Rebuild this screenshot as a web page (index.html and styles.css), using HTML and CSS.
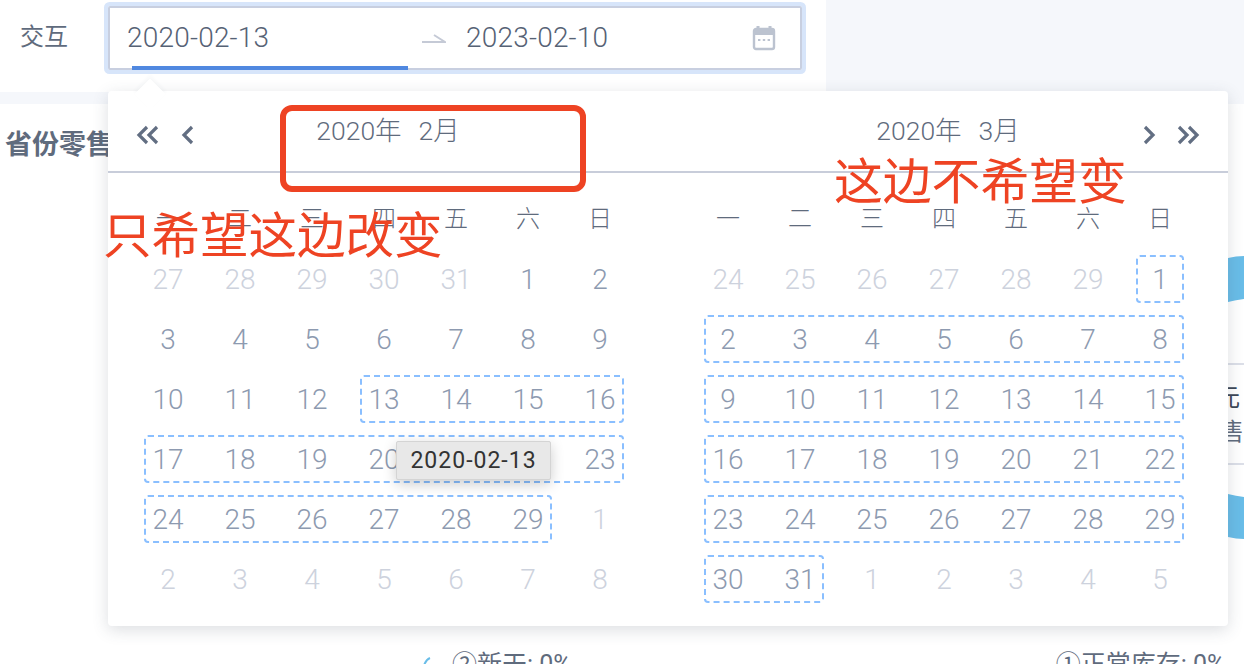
FILE: index.html
```html
<!DOCTYPE html>
<html lang="zh-CN">
<head>
  <meta charset="UTF-8">
  <title>交互</title>
  <link rel="stylesheet" href="styles.css">
</head>
<body>
  <div class="page">
    <div class="top">
      <div class="filter">
        <span class="filter-label">交互</span>
        <div class="range-input">
          <span class="date-text date-start">2020-02-13</span>
          <svg class="range-arrow" width="24" height="12" viewBox="0 0 24 12"><path d="M0 10H23L12 3" fill="none" stroke="#c5cad6" stroke-width="2"/></svg>
          <span class="date-text">2023-02-10</span>
          <svg class="cal-icon" width="24" height="26" viewBox="0 0 24 26"><path d="M6 1v4M18 1v4" stroke="#bcc3d0" stroke-width="3"/><rect x="2" y="4" width="20" height="20" rx="2" fill="none" stroke="#bcc3d0" stroke-width="2.4"/><rect x="2" y="4" width="20" height="6" fill="#bcc3d0"/><path d="M6 15h2.4M10.8 15h2.4M15.6 15h2.4" stroke="#bcc3d0" stroke-width="2"/></svg>
        </div>
      </div>
    </div>

    <div class="report">
      <div class="report-title">省份零售</div>
      <div class="side">
        <svg class="arc" width="16" height="48" viewBox="0 0 16 48"><path d="M0 3Q8 1 16 1V44Q8 45 0 47Z" fill="#69bde8"/></svg>
        <div class="side-card">
          <div class="side-main">元</div>
          <div class="side-sub">售</div>
        </div>
        <svg class="arc arc-low" width="16" height="48" viewBox="0 0 16 48"><path d="M0 0Q8 2 16 3V45Q8 45 0 43Z" fill="#69bde8"/></svg>
      </div>
      <div class="legend">
        <svg class="legend-arc" width="10" height="12" viewBox="0 0 10 12"><path d="M9 1Q4 3 2 12" fill="none" stroke="#69bde8" stroke-width="2"/></svg>
        <span class="legend-item">②新天: 0%</span>
        <span class="legend-item legend-last">①正常库存: 0%</span>
      </div>
    </div>

    <div class="picker">
      <div class="picker-arrow"></div>
      <div class="panel">
        <div class="panel-head">
          <div class="nav">
            <svg width="24" height="20" viewBox="0 0 24 20"><path d="M11 2L3 10L11 18M21 2L13 10L21 18" fill="none" stroke="#626e82" stroke-width="3.2"/></svg>
            <svg width="14" height="20" viewBox="0 0 14 20"><path d="M11 2L3 10L11 18" fill="none" stroke="#626e82" stroke-width="3.2"/></svg>
          </div>
          <div class="panel-title">2020年&nbsp; 2月</div>
        </div>
        <div class="panel-body">
          <div class="week week-head"><span class="day">一</span><span class="day">二</span><span class="day">三</span><span class="day">四</span><span class="day">五</span><span class="day">六</span><span class="day">日</span></div>
          <div class="week"><span class="day off">27</span><span class="day off">28</span><span class="day off">29</span><span class="day off">30</span><span class="day off">31</span><span class="day">1</span><span class="day">2</span></div>
          <div class="week"><span class="day">3</span><span class="day">4</span><span class="day">5</span><span class="day">6</span><span class="day">7</span><span class="day">8</span><span class="day">9</span></div>
          <div class="week"><span class="day">10</span><span class="day">11</span><span class="day">12</span><div class="mark"><span class="day">13</span><span class="day">14</span><span class="day">15</span><span class="day">16</span></div></div>
          <div class="week"><div class="mark"><span class="day">17</span><span class="day">18</span><span class="day">19</span><span class="day">20</span><span class="day">21</span><span class="day">22</span><span class="day">23</span></div></div>
          <div class="week"><div class="mark"><span class="day">24</span><span class="day">25</span><span class="day">26</span><span class="day">27</span><span class="day">28</span><span class="day">29</span></div><span class="day off">1</span></div>
          <div class="week"><span class="day off">2</span><span class="day off">3</span><span class="day off">4</span><span class="day off">5</span><span class="day off">6</span><span class="day off">7</span><span class="day off">8</span></div>
        </div>
      </div>
      <div class="panel">
        <div class="panel-head">
          <div></div>
          <div class="panel-title">2020年&nbsp; 3月</div>
          <div class="nav nav-right">
            <svg width="14" height="20" viewBox="0 0 14 20"><path d="M3 2L11 10L3 18" fill="none" stroke="#626e82" stroke-width="3.2"/></svg>
            <svg width="24" height="20" viewBox="0 0 24 20"><path d="M3 2L11 10L3 18M13 2L21 10L13 18" fill="none" stroke="#626e82" stroke-width="3.2"/></svg>
          </div>
        </div>
        <div class="panel-body">
          <div class="week week-head"><span class="day">一</span><span class="day">二</span><span class="day">三</span><span class="day">四</span><span class="day">五</span><span class="day">六</span><span class="day">日</span></div>
          <div class="week"><span class="day off">24</span><span class="day off">25</span><span class="day off">26</span><span class="day off">27</span><span class="day off">28</span><span class="day off">29</span><div class="mark"><span class="day">1</span></div></div>
          <div class="week"><div class="mark"><span class="day">2</span><span class="day">3</span><span class="day">4</span><span class="day">5</span><span class="day">6</span><span class="day">7</span><span class="day">8</span></div></div>
          <div class="week"><div class="mark"><span class="day">9</span><span class="day">10</span><span class="day">11</span><span class="day">12</span><span class="day">13</span><span class="day">14</span><span class="day">15</span></div></div>
          <div class="week"><div class="mark"><span class="day">16</span><span class="day">17</span><span class="day">18</span><span class="day">19</span><span class="day">20</span><span class="day">21</span><span class="day">22</span></div></div>
          <div class="week"><div class="mark"><span class="day">23</span><span class="day">24</span><span class="day">25</span><span class="day">26</span><span class="day">27</span><span class="day">28</span><span class="day">29</span></div></div>
          <div class="week"><div class="mark"><span class="day">30</span><span class="day">31</span></div><span class="day off">1</span><span class="day off">2</span><span class="day off">3</span><span class="day off">4</span><span class="day off">5</span></div>
        </div>
      </div>
    </div>

    <div class="title-tip">2020-02-13</div>

    <div class="note-box"></div>
    <div class="note note-left">只希望这边改变</div>
    <div class="note note-right">这边不希望变</div>
  </div>
</body>
</html>
```

FILE: styles.css
```css
* {
  box-sizing: border-box;
}
html, body {
  margin: 0;
  height: 100%;
  overflow: hidden;
}
body {
  font-family: Roboto, "Noto Sans CJK SC", sans-serif;
  color: #5f6b7d;
  background: #fff;
}
.page {
  position: relative;
  width: 1244px;
  height: 664px;
  overflow: hidden;
}

/* top filter bar */
.top {
  height: 104px;
  background: #f5f7fb;
}
.filter {
  display: flex;
  align-items: flex-start;
  width: 826px;
  height: 92px;
  padding-top: 6px;
  background: #fff;
}
.filter-label {
  width: 108px;
  padding-left: 20px;
  font-size: 24px;
  line-height: 62px;
}
.range-input {
  position: relative;
  display: flex;
  align-items: center;
  width: 694px;
  height: 64px;
  padding: 0 24px 0 17px;
  border: 2px solid #c8cfe0;
  box-shadow: 0 0 0 4px #d7e5fa;
  border-radius: 2px;
}
.date-text {
  font-size: 28px;
  font-weight: 300;
  letter-spacing: 0.2px;
  color: #566275;
  line-height: 58px;
}
.date-start {
  width: 295px;
}
.date-start::after {
  content: "";
  position: absolute;
  left: 22px;
  bottom: -2px;
  width: 276px;
  height: 4px;
  background: #5088e0;
}
.range-arrow {
  margin-right: 20px;
  flex: none;
}
.cal-icon {
  margin-left: auto;
}

/* stuff behind the picker */
.report {
  display: grid;
  grid-template-columns: 1fr 34px;
  grid-template-rows: 548px 1fr;
}
.report-title {
  padding: 26px 0 0 5px;
  font-size: 27px;
  font-weight: 700;
  line-height: 30px;
  white-space: nowrap;
}
.side {
  padding-top: 151px;
}
.arc {
  display: block;
  margin-left: 18px;
}
.arc-low {
  margin-top: 29px;
}
.side-card {
  height: 102px;
  margin-top: 60px;
  border-top: 2px solid #dcdfe8;
  border-bottom: 2px solid #dcdfe8;
  overflow: hidden;
  padding-top: 16px;
  font-size: 24px;
  line-height: 34px;
  text-align: right;
  white-space: nowrap;
}
.side-main {
  padding-right: 4px;
  color: #3c4656;
}
.legend {
  grid-column: 1 / 3;
  display: flex;
  align-items: flex-start;
  padding-left: 421px;
  font-size: 25px;
  line-height: 26px;
  white-space: nowrap;
}
.legend-arc {
  margin: 5px 21px 0 0;
}
.legend-last {
  margin-left: 484px;
}

/* date picker popup */
.picker {
  position: absolute;
  left: 108px;
  top: 91px;
  display: flex;
  width: 1120px;
  height: 535px;
  background: #fff;
  border-radius: 4px;
  box-shadow: 0 4px 16px rgba(60, 70, 90, 0.18);
}
.picker-arrow {
  position: absolute;
  left: 31px;
  top: -8px;
  width: 22px;
  height: 22px;
  background: #fff;
  transform: rotate(45deg);
  box-shadow: -2px -2px 4px rgba(60, 70, 90, 0.04);
}
.panel {
  position: relative;
  width: 560px;
}
.panel-head {
  display: grid;
  grid-template-columns: 1fr auto 1fr;
  height: 82px;
  padding: 24px 28px 0;
  border-bottom: 2px solid #c8cdda;
}
.panel-title {
  font-size: 26.5px;
  font-weight: 300;
  word-spacing: 2px;
  line-height: 32px;
  color: #5f6b7d;
}
.nav {
  display: flex;
  gap: 21px;
  padding-top: 10px;
  align-items: flex-start;
}
.nav-right {
  justify-content: flex-end;
  gap: 20px;
}
.panel-body {
  padding: 17px 0 0 24px;
}
.week {
  display: flex;
  height: 60px;
}
.day {
  flex: none;
  width: 72px;
  font-size: 28px;
  font-weight: 300;
  line-height: 60px;
  text-align: center;
  color: #8d9ab0;
}
.day.off {
  color: #cdd2dd;
}
.week-head .day {
  font-size: 24px;
  line-height: 58px;
  color: #5f6b7d;
}
.mark {
  position: relative;
  display: flex;
}
.mark::before {
  content: "";
  position: absolute;
  top: 5px;
  bottom: 7px;
  left: 12px;
  right: 12px;
  border: 2px dashed #8abfff;
  border-radius: 4px;
}

/* browser title tooltip */
.title-tip {
  position: absolute;
  left: 396px;
  top: 441px;
  width: 155px;
  height: 39px;
  background: #e8e8e8;
  border: 1px solid #d4d4d4;
  border-radius: 2px;
  box-shadow: 0 4px 14px rgba(0, 0, 0, 0.2);
  font-size: 23px;
  line-height: 37px;
  letter-spacing: 1px;
  text-align: center;
  color: #333;
}

/* red notes drawn over the screenshot */
.note-box {
  position: absolute;
  left: 280px;
  top: 105px;
  width: 306px;
  height: 87px;
  border: 6px solid #ee4323;
  border-radius: 12px;
}
.note {
  position: absolute;
  line-height: 56px;
  color: #ee4323;
  white-space: nowrap;
}
.note-left {
  left: 103px;
  top: 209px;
  font-size: 48.5px;
}
.note-right {
  left: 834px;
  top: 155px;
  font-size: 48.8px;
}
```
